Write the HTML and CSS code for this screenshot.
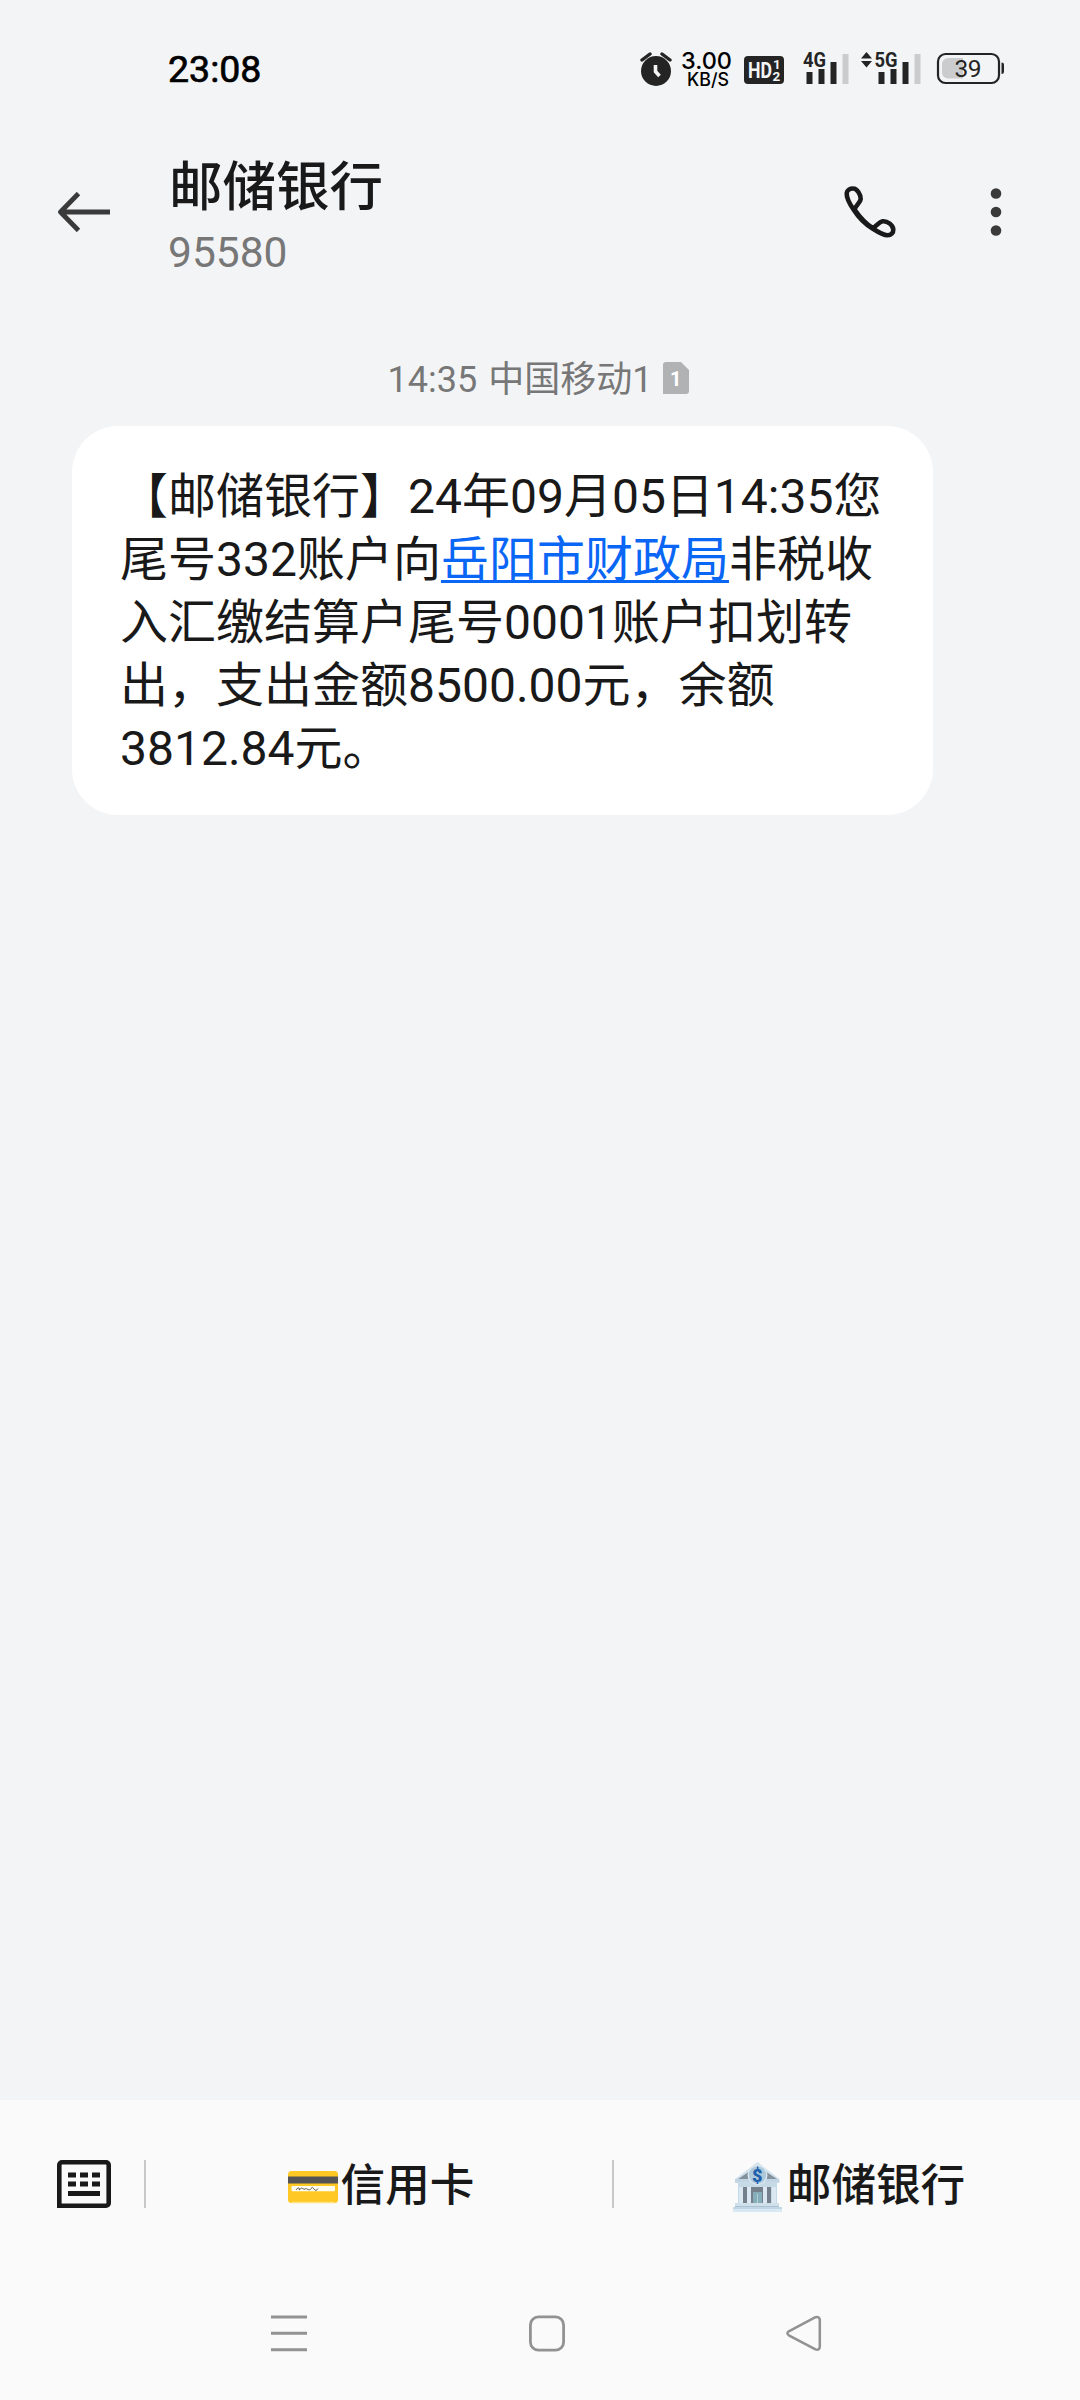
FILE: index.html
```html
<!DOCTYPE html>
<html lang="zh-CN">
<head>
<meta charset="utf-8">
<title>邮储银行</title>
<link rel="stylesheet" href="styles.css">
</head>
<body>
<div class="screen">
  <div class="status">
    <span class="clock">23:08</span>
    <svg class="status-icons" viewBox="640 40 366 60">
      <g fill="#242424">
        <circle cx="656" cy="71" r="15"/>
        <path d="M642 60l8-6M670 60l-8-6" stroke="#242424" stroke-width="3.4" stroke-linecap="round"/>
        <path d="M655.500 65v6.500l4 4.500" fill="none" stroke="#f3f4f6" stroke-width="3.600"/>
        <text class="speed" x="681" y="69" font-size="23.500" textLength="51">3.00</text>
        <text class="speed" x="687" y="86" font-size="18" textLength="42" lengthAdjust="spacingAndGlyphs">KB/S</text>
        <rect x="744" y="56" width="40" height="28" rx="4"/>
        <text class="hd" x="748" y="78" font-size="22" textLength="24" lengthAdjust="spacingAndGlyphs">HD</text>
        <text class="hd" x="773" y="69" font-size="13.500">1</text>
        <text class="hd" x="772.500" y="81" font-size="13.500">2</text>
        <text class="net" x="803" y="66.700" font-size="20.500" textLength="23" lengthAdjust="spacingAndGlyphs">4G</text>
        <path d="M806.500 72h6v12h-6zM818.500 69h6v15h-6zM830.500 62h6v22h-6z"/>
        <path d="M861 58.500l5.500-6.500 5.500 6.500zM861 61h11l-5.500 6.500z"/>
        <text class="net" x="874.500" y="66.700" font-size="20.500" textLength="23" lengthAdjust="spacingAndGlyphs">5G</text>
        <path d="M878.500 72h6v12h-6zM890.500 69h6v15h-6zM902.500 62h6v22h-6z"/>
        <path d="M842.500 54h6v30h-6zM914.500 54h6v30h-6z" fill="#cbccce"/>
        <path d="M963 58v20.500h-15a6 6 0 0 1-6-6v-8.500a6 6 0 0 1 6-6z" fill="#cbccce"/>
        <rect x="938" y="54" width="61" height="29" rx="7.500" fill="none" stroke="#242424" stroke-width="2.200"/>
        <path d="M1001.500 62.500q2.500 0 2.500 2v7.500q0 2-2.500 2z"/>
        <text class="charge" x="954.500" y="77" font-size="24.500" textLength="27">39</text>
      </g>
    </svg>
  </div>

  <header class="header">
    <svg class="back" viewBox="0 0 52 40" width="52" height="40"><path d="M52 20H3M20.500 1.500L2.500 20l18 18.500" fill="none" stroke="#3a3a3a" stroke-width="4.800" stroke-linejoin="round"/></svg>
    <div class="contact">
      <h1 class="name">邮储银行</h1>
      <p class="number">95580</p>
    </div>
    <svg class="call" viewBox="844 186 52 52" width="52" height="52"><path d="M853.500 209.500C849 203 846.500 197 846.700 193.200C847 190 850 188.300 853.500 188.500C857 188.600 861 195 860.700 199C860.500 202.500 856 205 854.500 209.500C860 217.500 865 223 872.500 228C877 226.500 878.500 222 882.500 221.300C887.500 220.800 893 225 893.300 229.500C893.500 233 891 235.200 887.500 235.300C883.500 235.300 878 232 872.500 228.500C864 223.500 858 216.500 853.500 209.500Z" fill="none" stroke="#191919" stroke-width="4.600" stroke-linejoin="round"/></svg>
    <svg class="more" viewBox="0 0 12 50" width="12" height="50" fill="#3a3a3a"><circle cx="6" cy="6.500" r="5.300"/><circle cx="6" cy="25" r="5.300"/><circle cx="6" cy="43.500" r="5.300"/></svg>
  </header>

  <main class="thread">
    <div class="meta">
      <span>14:35 中国移动1</span>
      <svg viewBox="0 0 26 32" width="26" height="32"><path d="M3 0h15l8 8v21a3 3 0 0 1-3 3H0V3a3 3 0 0 1 3-3z" fill="#b1b2b4"/><text class="sim" x="7" y="23.500">1</text></svg>
    </div>
    <div class="bubble">【邮储银行】24年09月05日14:35您<br>尾号332账户向<a class="link">岳阳市财政局</a>非税收<br>入汇缴结算户尾号0001账户扣划转<br>出，支出金额8500.00元，余额<br>3812.84元。</div>
  </main>

  <footer class="footer">
    <div class="menu">
      <div class="keyboard">
        <svg viewBox="0 0 54 48" width="54" height="48"><path d="M2.300 45.700V5a2.700 2.700 0 0 1 2.700-2.700h44A2.700 2.700 0 0 1 51.700 5v38a2.700 2.700 0 0 1-2.700 2.700z" fill="none" stroke="#191919" stroke-width="4.600"/><path d="M11 12.500h8v5h-8zM23 12.500h8v5h-8zM35 12.500h8v5h-8zM11 21.500h8v5h-8zM23 21.500h8v5h-8zM35 21.500h8v5h-8zM11 31h32v5H11z" fill="#191919"/></svg>
      </div>
      <div class="item">
        <svg viewBox="0 0 54 50" width="54" height="50">
          <rect x="1" y="9" width="50" height="32" rx="3.500" fill="#ffc824"/>
          <path d="M4.500 40.500h43" stroke="#ffe282" stroke-width="1.500"/>
          <path d="M1 14.500h50v7H1z" fill="#545454"/>
          <rect x="4.500" y="24" width="43.500" height="5.300" rx="1" fill="#fffdf0"/>
          <path d="M9 28q2-3 3-2t0 2q3-3 4-1.500t2 .5 3 .5 3-1 3 .5 4-.5" fill="none" stroke="#555" stroke-width=".9"/>
        </svg>
        <span>信用卡</span>
      </div>
      <div class="item">
        <svg viewBox="733 2161 54 50" width="54" height="50">
          <path d="M735 2178l22.500-17 22 17v4h-44.500z" fill="#d3e2ec"/>
          <path d="M738 2178l12-8v8zM777 2178l-12-8v8z" fill="#83919c"/>
          <path d="M735 2178h44v3.500h-44z" fill="#c0d4e3"/>
          <path d="M738 2182h39v21h-39z" fill="#c6d9e7"/>
          <path d="M751 2186h12v17h-12z" fill="#74818c"/>
          <path d="M753 2191h9v12h-9z" fill="#86aeb9"/>
          <path d="M757.500 2193v10" stroke="#b5d0d6"/>
          <path d="M743 2186h4v17h-4zM767 2186h4v17h-4z" fill="#74818c"/>
          <path d="M739 2186h4v17h-4zM747 2186h4v17h-4zM763 2186h4v17h-4zM772 2186h4v17h-4z" fill="#dbe8f1"/>
          <path d="M735 2202h44v4h-44z" fill="#d0e0eb"/>
          <path d="M733 2206h49v5h-49z" fill="#d9e9f4"/>
          <path d="M735 2205.500h44M733 2207h49" stroke="#aac3d4"/>
          <circle cx="757.500" cy="2174" r="10" fill="#dce9f2"/>
          <circle cx="757.500" cy="2174" r="8.700" fill="#adc9da"/>
          <text class="dollar" x="757.300" y="2180.500" text-anchor="middle">$</text>
        </svg>
        <span>邮储银行</span>
      </div>
    </div>
    <nav class="nav">
      <svg viewBox="0 0 36 37" width="36" height="37"><path d="M0 2h36M0 18.300h36M0 34.700h36" stroke="#929292" stroke-width="3"/></svg>
      <svg viewBox="0 0 36 37" width="36" height="37"><rect x="1.400" y="1.900" width="33.200" height="33.200" rx="8" fill="none" stroke="#929292" stroke-width="2.800"/></svg>
      <svg viewBox="0 0 36 37" width="36" height="37"><path d="M29.500 2.200L2.800 16.300q-2.800 2 0 4L29.500 34.400q3.800 1 4.300-2.300V4.500q-.5-3.300-4.300-2.300z" fill="none" stroke="#929292" stroke-width="2.500" stroke-linejoin="round"/></svg>
    </nav>
  </footer>
</div>
</body>
</html>
```

FILE: styles.css
```css
* {
  box-sizing: border-box;
  margin: 0;
  padding: 0;
}

body {
  background: #f3f4f6;
  color: #191919;
  font-family: Roboto, "Noto Sans CJK SC", sans-serif;
}

svg {
  display: block;
  flex: none;
}

.screen {
  width: 1080px;
  height: 2400px;
  display: flex;
  flex-direction: column;
}

.status {
  height: 136px;
  padding: 40px 74px 0 168px;
  display: flex;
  justify-content: space-between;
  align-items: flex-start;
}

.clock {
  padding-top: 7px;
  font-size: 37.5px;
  line-height: 44px;
  font-weight: 400;
  -webkit-text-stroke: 0.7px #000;
  color: #000;
}

.status-icons {
  width: 366px;
  height: 60px;
}

.speed {
  font-family: Inter, sans-serif;
  font-weight: 500;
  fill: #000;
}

.hd {
  font-weight: 700;
  fill: #f3f4f6;
}

.net {
  font-weight: 700;
}

.charge {
  font-weight: 400;
}

.header {
  height: 152px;
  padding: 0 78px 0 58px;
  display: flex;
  align-items: center;
}

.contact {
  flex: 1;
  align-self: flex-start;
  padding: 21px 0 0 58px;
}

.name {
  padding-left: 1px;
  font-size: 53.5px;
  line-height: 62px;
  font-weight: 500;
}

.number {
  margin-top: 9px;
  font-size: 42.5px;
  line-height: 50px;
  color: #777;
}

.call {
  margin-right: 94px;
}

.thread {
  flex: 1;
  padding: 71px 72px 0;
}

.meta {
  padding-right: 3px;
  display: flex;
  justify-content: center;
  gap: 11px;
  font-size: 36px;
  line-height: 42px;
  word-spacing: 2px;
  color: #777;
}

.meta svg {
  margin-top: 3px;
}

.sim {
  font-size: 20px;
  font-weight: 700;
  fill: #fff;
}

.bubble {
  width: 861px;
  height: 389px;
  margin-top: 25px;
  padding: 39px 0 35px 48px;
  border-radius: 46px;
  background: #fff;
  font-size: 48px;
  line-height: 63px;
  white-space: nowrap;
  text-spacing-trim: space-all;
}

.link {
  color: #0a66f5;
  text-decoration: underline;
  text-decoration-thickness: 2.5px;
  text-underline-offset: 4px;
  text-decoration-skip-ink: none;
}

.footer {
  height: 300px;
  background: #fafafa;
}

.menu {
  height: 168px;
  display: flex;
  align-items: center;
}

.keyboard {
  width: 146px;
  height: 48px;
  padding-left: 57px;
  border-right: 2px solid #c8c8c8;
}

.item {
  width: 466px;
  height: 48px;
  padding: 5px 0 0 3px;
  display: flex;
  justify-content: center;
  align-items: center;
  font-size: 44.6px;
  line-height: 53px;
  font-weight: 500;
}

.item + .item {
  width: 468px;
  padding-left: 4px;
  border-left: 2px solid #c8c8c8;
}

.dollar {
  font-size: 18px;
  font-weight: 900;
  fill: #1e5fae;
}

.nav {
  padding: 47px 258px 0 271px;
  display: flex;
  justify-content: space-between;
}
```
